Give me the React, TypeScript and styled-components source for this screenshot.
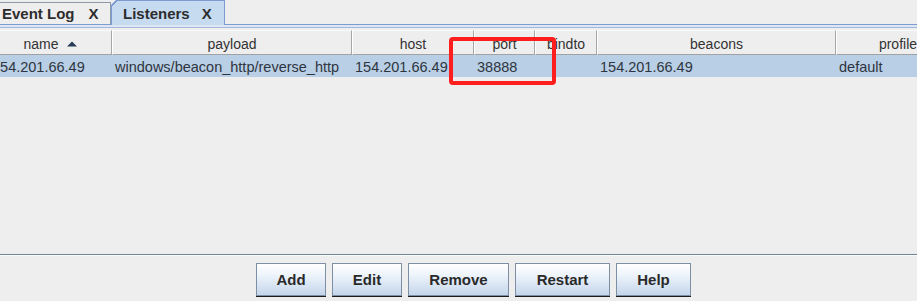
import React from "react";
import styled, { createGlobalStyle } from "styled-components";

const GlobalStyle = createGlobalStyle`
  html, body {
    margin: 0;
    padding: 0;
    background: #eeeeee;
    overflow: hidden;
  }
  body {
    font-family: "Liberation Sans", Arial, sans-serif;
    color: #2f2f2f;
  }
  * { box-sizing: border-box; }
`;

const Root = styled.div`
  position: relative;
  width: 917px;
  height: 301px;
  display: flex;
  flex-direction: column;
  overflow: hidden;
  background: #eeeeee;
`;

const TabStrip = styled.div`
  display: flex;
  align-items: flex-end;
  height: 25px;
`;

const Tab = styled.div<{ $selected?: boolean }>`
  display: flex;
  align-items: center;
  gap: ${(p) => (p.$selected ? "12px" : "14px")};
  font-size: 15px;
  font-weight: bold;
  color: #2d2d2d;
  white-space: nowrap;
  ${(p) =>
    p.$selected
      ? `
    height: 25px;
    width: 114px;
    padding-left: 11px;
    background: linear-gradient(135deg, #eeeeee 0, #eeeeee 3.5px, #7b9bd1 3.5px, #7b9bd1 5px, transparent 5px), #c7dbf0;
    background-origin: border-box;
    border: 1px solid #7b9bd1;
    border-bottom: none;
    clip-path: polygon(5px 0, 100% 0, 100% 100%, 0 100%, 0 5px);
  `
      : `
    height: 23px;
    width: 117px;
    margin-left: -6px;
    padding-left: 8px;
    background: #eeeeee;
    border: 1px solid #8f9aa8;
    border-left: none;
    border-bottom: 1px solid #7b9bd1;
  `}
`;

const TabFiller = styled.div`
  flex: 1;
  height: 100%;
  border-bottom: 1px solid #7b9bd1;
`;

const ContentEdge = styled.div`
  height: 5px;
  border-top: 2px solid #dde7f4;
  border-bottom: 2px solid #eeeeee;
  background: #a3b9dc;
`;

const TableArea = styled.div`
  flex: 1;
  margin-left: -11px;
  width: 1000px;
`;

const Grid = styled.div`
  display: grid;
  grid-template-columns: 123px 240px 122px 61px 62px 239px 124px;
`;

const HeaderCell = styled.div<{ $first?: boolean }>`
  height: 25px;
  display: flex;
  align-items: center;
  justify-content: center;
  gap: 8px;
  padding-top: 3px;
  font-size: 14px;
  color: #333333;
  background: #eeeeee;
  border-top: 1px solid #fafafa;
  border-bottom: 1px solid #a2a2a2;
  border-right: 1px solid #a6a6a6;
  border-left: ${(p) => (p.$first ? "none" : "1px solid #ffffff")};
  white-space: nowrap;
`;

const DataCell = styled.div`
  height: 22px;
  display: flex;
  align-items: center;
  padding-left: 3px;
  padding-top: 1px;
  font-size: 14.5px;
  color: #2f3540;
  background: #b8cfe5;
  white-space: nowrap;
  overflow: hidden;
`;

const Separator = styled.div`
  height: 2px;
  border-top: 1px solid #718399;
  background: #fbfbfb;
`;

const ButtonBar = styled.div`
  display: flex;
  gap: 6px;
  padding-left: 256px;
  padding-top: 7px;
  height: 45px;
`;

const Button = styled.button<{ $w: number }>`
  width: ${(p) => p.$w}px;
  height: 33px;
  border: 1px solid #7d8fa5;
  border-radius: 0;
  background: linear-gradient(#ffffff 0%, #eef4fb 35%, #c4d6eb 100%);
  box-shadow: 0 1px 0 #1c1c1c;
  font-family: "Liberation Sans", Arial, sans-serif;
  font-size: 15px;
  font-weight: bold;
  color: #2a2a2a;
  padding: 0;
  cursor: pointer;
`;

const Highlight = styled.div`
  position: absolute;
  left: 449px;
  top: 37px;
  width: 107px;
  height: 48px;
  border: 4px solid #ff1e1e;
  border-radius: 4px;
  pointer-events: none;
`;

const SortArrow = () => (
  <svg width="10" height="6" viewBox="0 0 10 6">
    <polygon points="0,5.5 5,0.5 10,5.5" fill="#243a52" />
  </svg>
);

const columns = ["name", "payload", "host", "port", "bindto", "beacons", "profile"];
const row = [
  "154.201.66.49",
  "windows/beacon_http/reverse_http",
  "154.201.66.49",
  "38888",
  "",
  "154.201.66.49",
  "default",
];
const buttons: [string, number][] = [
  ["Add", 70],
  ["Edit", 70],
  ["Remove", 101],
  ["Restart", 95],
  ["Help", 75],
];

export default function App() {
  return (
    <>
      <GlobalStyle />
      <Root>
        <TabStrip>
          <Tab>
            <span>Event Log</span>
            <span>X</span>
          </Tab>
          <Tab $selected>
            <span>Listeners</span>
            <span>X</span>
          </Tab>
          <TabFiller />
        </TabStrip>
        <ContentEdge />
        <TableArea>
          <Grid>
            {columns.map((c, i) => (
              <HeaderCell key={c} $first={i === 0}>
                <span>{c}</span>
                {i === 0 && <SortArrow />}
              </HeaderCell>
            ))}
          </Grid>
          <Grid>
            {row.map((v, i) => (
              <DataCell key={i}>{v}</DataCell>
            ))}
          </Grid>
        </TableArea>
        <Separator />
        <ButtonBar>
          {buttons.map(([label, w]) => (
            <Button key={label} $w={w}>
              {label}
            </Button>
          ))}
        </ButtonBar>
        <Highlight />
      </Root>
    </>
  );
}
